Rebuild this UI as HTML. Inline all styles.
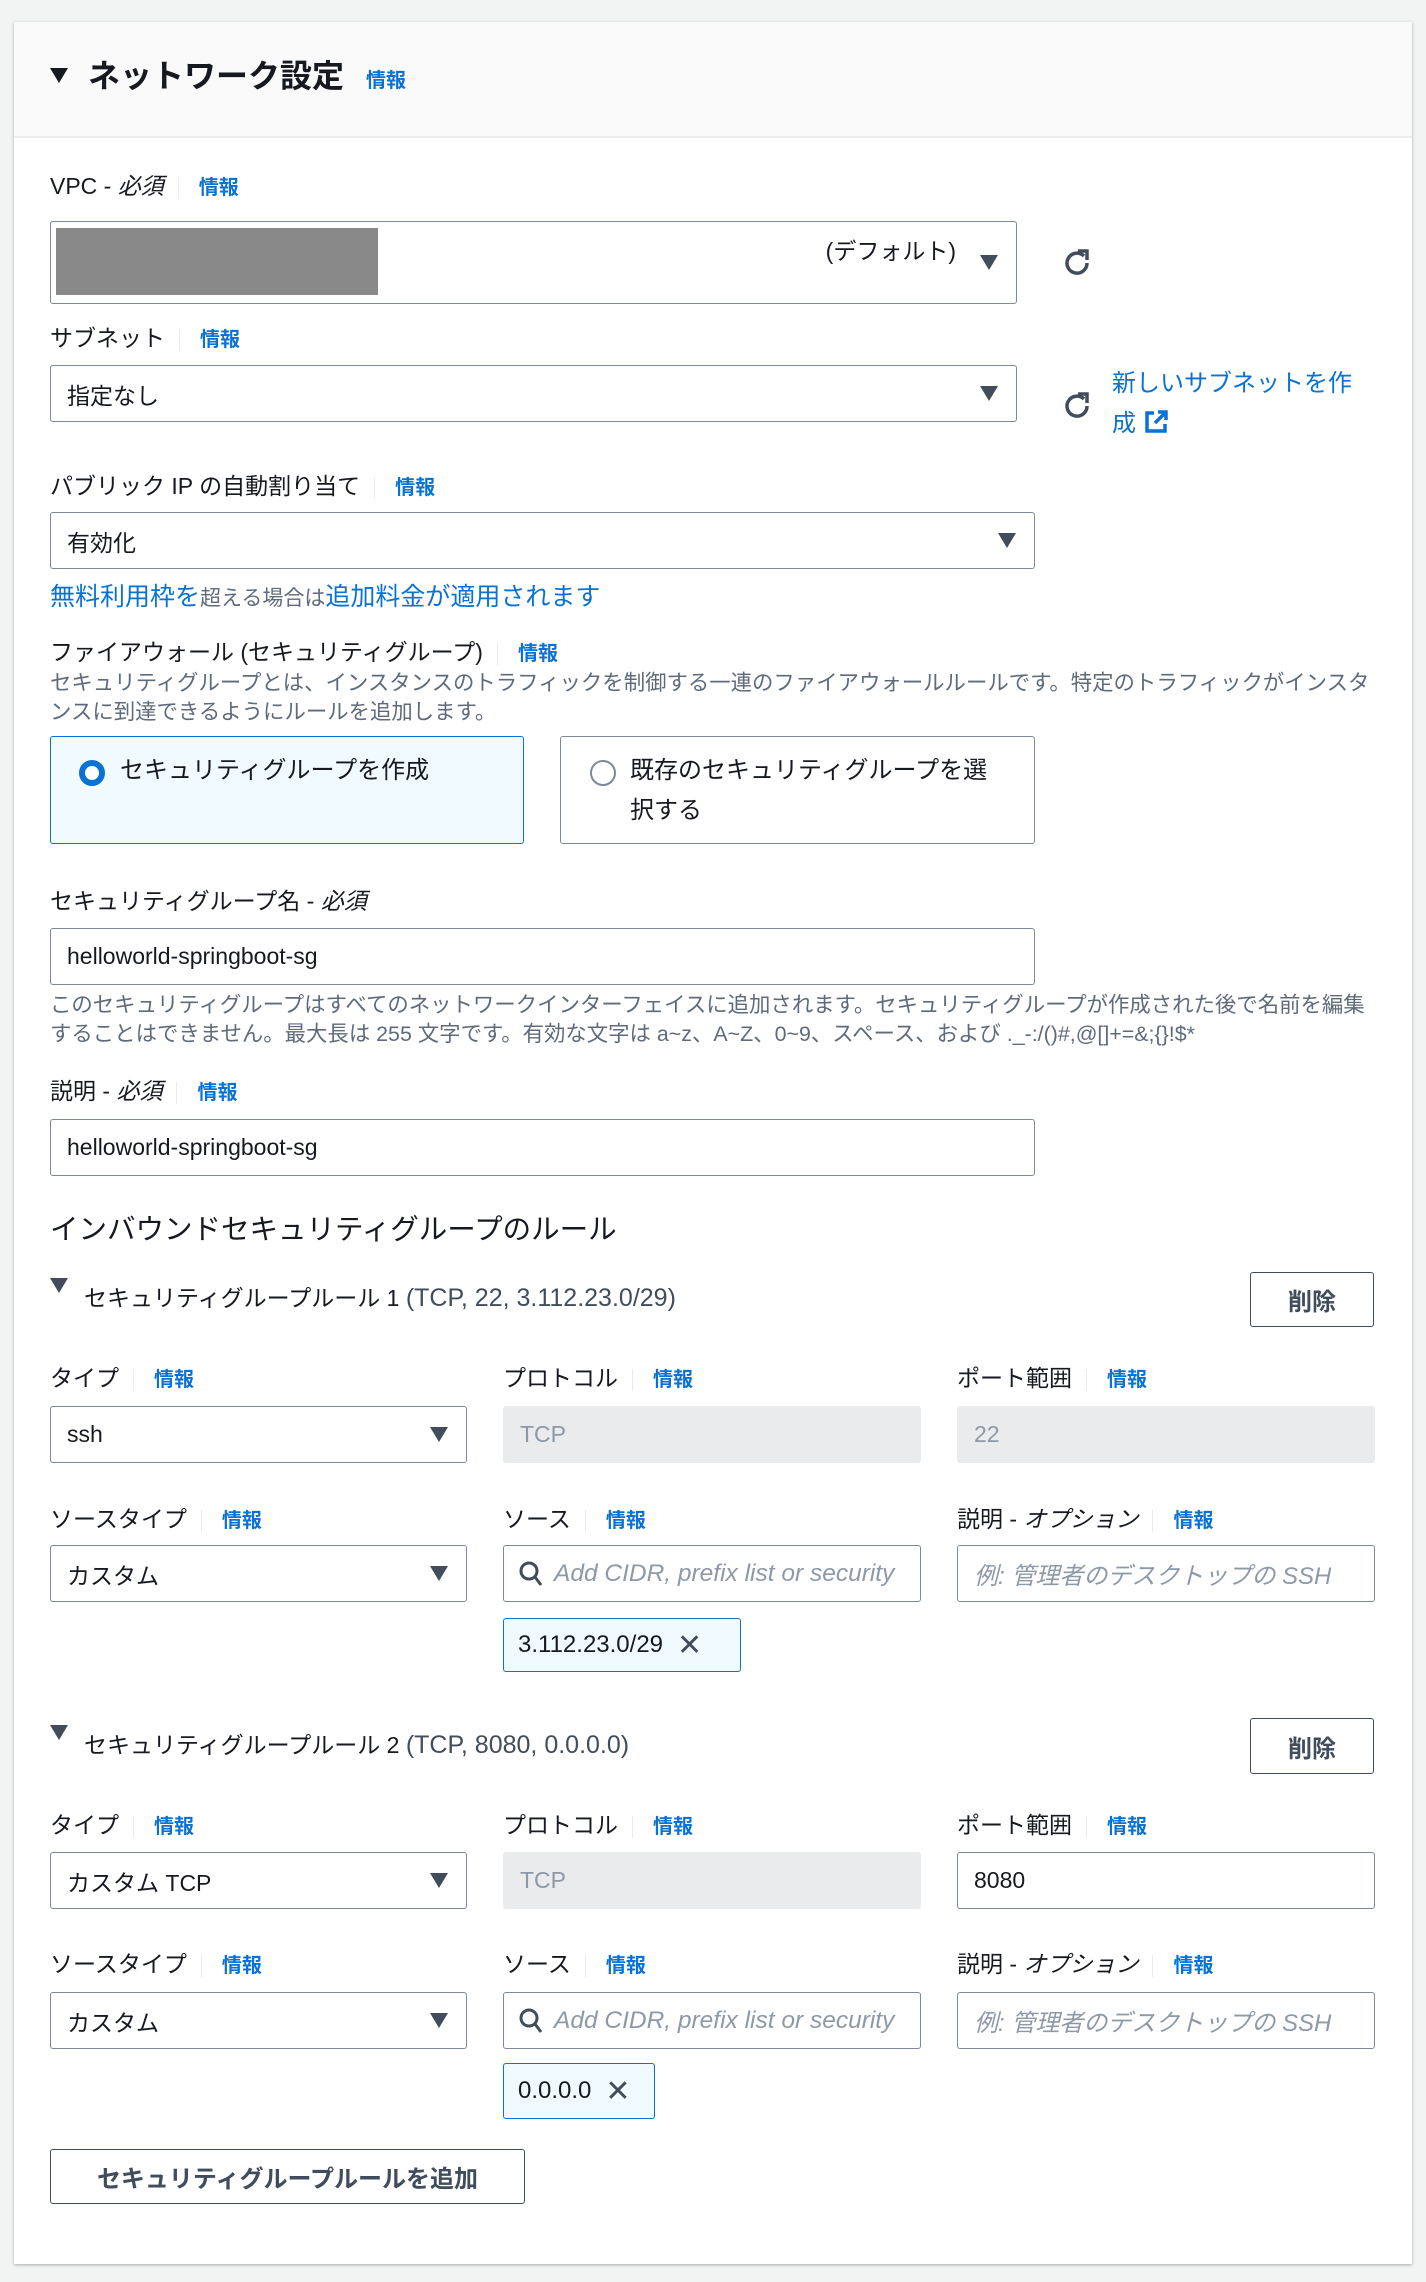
<!DOCTYPE html>
<html><head><meta charset="utf-8"><style>
body{margin:0;width:1426px;height:2282px;background:#f2f3f3;font-family:"Liberation Sans","Noto Sans CJK JP",sans-serif;color:#16191f;position:relative;overflow:hidden}
.card{position:absolute;left:14px;top:22px;width:1398px;height:2242px;background:#fff;box-shadow:0 1px 3px rgba(0,0,0,.3)}
.hdr{position:absolute;left:14px;top:22px;width:1398px;height:114px;background:#fafafa;border-bottom:2px solid #e9ebed}
.a{position:absolute;white-space:nowrap}
.lbl{font-size:23px;line-height:30px}
.info{font-size:20px;font-weight:bold;color:#0972d3;line-height:30px;padding-left:20px;border-left:1px solid #e9ebed;margin-left:14px}
.box{position:absolute;border:1.5px solid #7d8998;border-radius:3px;background:#fff;box-sizing:border-box;font-size:23px;padding-left:16px;display:flex;align-items:center}
.dis{background:#e9ebed;border-color:#e9ebed;color:#8d99a8}
.arr{position:absolute;right:18px;top:50%;margin-top:-8px;width:0;height:0;border-left:9px solid transparent;border-right:9px solid transparent;border-top:15px solid #414d5c}
.help{font-size:21.4px;color:#5f6b7a;line-height:29px}
.ph{color:#8d99a8;font-style:italic}
.btn{position:absolute;border:1.5px solid #414d5c;border-radius:3px;box-sizing:border-box;font-size:24px;font-weight:bold;color:#414d5c;display:flex;align-items:center;justify-content:center;background:#fff}
.tok{position:absolute;border:1.5px solid #0972d3;background:#f1faff;border-radius:3px;box-sizing:border-box;font-size:23px;display:flex;align-items:center;padding-left:14px}
</style></head><body>
<div class="card"></div>
<div class="hdr"></div>
<div class="a" style="left:50px;top:68px;width:0;height:0;border-left:9px solid transparent;border-right:9px solid transparent;border-top:15px solid #16191f"></div>
<div class="a" style="left:88px;top:56px;font-size:32px;font-weight:bold;line-height:40px">ネットワーク設定<span style="font-size:20px;color:#0972d3;margin-left:22px">情報</span></div>

<div class="a lbl" style="left:50px;top:171px">VPC - <i>必須</i><span class="info">情報</span></div>
<div class="box" style="left:50px;top:221px;width:967px;height:83px"><div style="position:absolute;left:5px;top:6px;width:322px;height:67px;background:#898989"></div><span style="position:absolute;right:60px;top:10px">(デフォルト)</span><div class="arr"></div></div>
<svg class="a" style="left:1062px;top:247px" width="30" height="30" viewBox="0 0 30 30"><path d="M22 9A10 10 0 1 0 25 16" fill="none" stroke="#414d5c" stroke-width="3.5"/><path d="M16 4h9v9" fill="none" stroke="#414d5c" stroke-width="3.5"/></svg>

<div class="a lbl" style="left:50px;top:323px">サブネット<span class="info">情報</span></div>
<div class="box" style="left:50px;top:365px;width:967px;height:57px">指定なし<div class="arr"></div></div>
<svg class="a" style="left:1062px;top:390px" width="30" height="30" viewBox="0 0 30 30"><path d="M22 9A10 10 0 1 0 25 16" fill="none" stroke="#414d5c" stroke-width="3.5"/><path d="M16 4h9v9" fill="none" stroke="#414d5c" stroke-width="3.5"/></svg>
<div class="a" style="left:1112px;top:364px;font-size:24px;line-height:40px;color:#0972d3">新しいサブネットを作<br>成 <svg width="26" height="26" viewBox="0 0 26 26" style="vertical-align:-4px"><path d="M11 4H4v18h18v-7M15 3h8v8M23 3L12 14" fill="none" stroke="#0972d3" stroke-width="3.5"/></svg></div>

<div class="a lbl" style="left:50px;top:471px">パブリック IP の自動割り当て<span class="info">情報</span></div>
<div class="box" style="left:50px;top:512px;width:985px;height:57px">有効化<div class="arr"></div></div>
<div class="a" style="left:50px;top:582px;font-size:25px;line-height:30px;color:#0972d3">無料利用枠を<span style="font-size:21px;color:#5f6b7a">超える場合は</span>追加料金が適用されます</div>

<div class="a lbl" style="left:50px;top:637px">ファイアウォール (セキュリティグループ)<span class="info">情報</span></div>
<div class="a help" style="left:50px;top:669px">セキュリティグループとは、インスタンスのトラフィックを制御する一連のファイアウォールルールです。特定のトラフィックがインスタ<br>ンスに到達できるようにルールを追加します。</div>
<div class="a" style="left:50px;top:736px;width:474px;height:108px;border:1.5px solid #0972d3;background:#f1faff;border-radius:3px;box-sizing:border-box"></div>
<div class="a" style="left:79px;top:760px;width:14px;height:14px;border:6px solid #0972d3;border-radius:50%;background:#fff"></div>
<div class="a lbl" style="left:120px;top:756px;font-size:24px">セキュリティグループを作成</div>
<div class="a" style="left:560px;top:736px;width:475px;height:108px;border:1.5px solid #7d8998;border-radius:3px;box-sizing:border-box"></div>
<div class="a" style="left:590px;top:760px;width:22px;height:22px;border:2px solid #7d8998;border-radius:50%"></div>
<div class="a lbl" style="left:630px;top:751px;line-height:40px;font-size:24px">既存のセキュリティグループを選<br>択する</div>

<div class="a lbl" style="left:50px;top:886px">セキュリティグループ名 - <i>必須</i></div>
<div class="box" style="left:50px;top:928px;width:985px;height:57px">helloworld-springboot-sg</div>
<div class="a help" style="left:50px;top:991px">このセキュリティグループはすべてのネットワークインターフェイスに追加されます。セキュリティグループが作成された後で名前を編集<br>することはできません。最大長は 255 文字です。有効な文字は a~z、A~Z、0~9、スペース、および ._-:/()#,@[]+=&amp;;{}!$*</div>

<div class="a lbl" style="left:50px;top:1076px">説明 - <i>必須</i><span class="info">情報</span></div>
<div class="box" style="left:50px;top:1119px;width:985px;height:57px">helloworld-springboot-sg</div>

<div class="a" style="left:50px;top:1212px;font-size:28.5px;line-height:36px">インバウンドセキュリティグループのルール</div>

<!-- rule 1 -->
<div class="a" style="left:50px;top:1278px;width:0;height:0;border-left:9px solid transparent;border-right:9px solid transparent;border-top:15px solid #414d5c"></div>
<div class="a lbl" style="left:84px;top:1283px">セキュリティグループルール 1 <span style="color:#414d5c;font-size:25px">(TCP, 22, 3.112.23.0/29)</span></div>
<div class="btn" style="left:1250px;top:1272px;width:124px;height:55px">削除</div>
<div class="a lbl" style="left:50px;top:1363px">タイプ<span class="info">情報</span></div>
<div class="a lbl" style="left:503px;top:1363px">プロトコル<span class="info">情報</span></div>
<div class="a lbl" style="left:957px;top:1363px">ポート範囲<span class="info">情報</span></div>
<div class="box" style="left:50px;top:1406px;width:417px;height:57px">ssh<div class="arr"></div></div>
<div class="box dis" style="left:503px;top:1406px;width:418px;height:57px">TCP</div>
<div class="box dis" style="left:957px;top:1406px;width:418px;height:57px">22</div>
<div class="a lbl" style="left:50px;top:1504px">ソースタイプ<span class="info">情報</span></div>
<div class="a lbl" style="left:503px;top:1504px">ソース<span class="info">情報</span></div>
<div class="a lbl" style="left:957px;top:1504px">説明 - <i>オプション</i><span class="info">情報</span></div>
<div class="box" style="left:50px;top:1545px;width:417px;height:57px">カスタム<div class="arr"></div></div>
<div class="box" style="left:503px;top:1545px;width:418px;height:57px;padding-left:14px;overflow:hidden"><svg width="26" height="28" viewBox="0 0 26 28"><circle cx="11" cy="11" r="8" fill="none" stroke="#414d5c" stroke-width="3"/><path d="M17 17l6 8" stroke="#414d5c" stroke-width="3"/></svg><span class="ph" style="margin-left:10px;font-size:24.5px">Add CIDR, prefix list or security</span></div>
<div class="box ph" style="left:957px;top:1545px;width:418px;height:57px;font-size:24px">例: 管理者のデスクトップの SSH</div>
<div class="tok" style="left:503px;top:1618px;width:238px;height:54px;font-size:24px">3.112.23.0/29<span style="margin-left:14px;font-size:30px;color:#414d5c">✕</span></div>

<!-- rule 2 -->
<div class="a" style="left:50px;top:1725px;width:0;height:0;border-left:9px solid transparent;border-right:9px solid transparent;border-top:15px solid #414d5c"></div>
<div class="a lbl" style="left:84px;top:1730px">セキュリティグループルール 2 <span style="color:#414d5c;font-size:25px">(TCP, 8080, 0.0.0.0)</span></div>
<div class="btn" style="left:1250px;top:1718px;width:124px;height:56px">削除</div>
<div class="a lbl" style="left:50px;top:1810px">タイプ<span class="info">情報</span></div>
<div class="a lbl" style="left:503px;top:1810px">プロトコル<span class="info">情報</span></div>
<div class="a lbl" style="left:957px;top:1810px">ポート範囲<span class="info">情報</span></div>
<div class="box" style="left:50px;top:1852px;width:417px;height:57px">カスタム TCP<div class="arr"></div></div>
<div class="box dis" style="left:503px;top:1852px;width:418px;height:57px">TCP</div>
<div class="box" style="left:957px;top:1852px;width:418px;height:57px">8080</div>
<div class="a lbl" style="left:50px;top:1949px">ソースタイプ<span class="info">情報</span></div>
<div class="a lbl" style="left:503px;top:1949px">ソース<span class="info">情報</span></div>
<div class="a lbl" style="left:957px;top:1949px">説明 - <i>オプション</i><span class="info">情報</span></div>
<div class="box" style="left:50px;top:1992px;width:417px;height:57px">カスタム<div class="arr"></div></div>
<div class="box" style="left:503px;top:1992px;width:418px;height:57px;padding-left:14px;overflow:hidden"><svg width="26" height="28" viewBox="0 0 26 28"><circle cx="11" cy="11" r="8" fill="none" stroke="#414d5c" stroke-width="3"/><path d="M17 17l6 8" stroke="#414d5c" stroke-width="3"/></svg><span class="ph" style="margin-left:10px;font-size:24.5px">Add CIDR, prefix list or security</span></div>
<div class="box ph" style="left:957px;top:1992px;width:418px;height:57px;font-size:24px">例: 管理者のデスクトップの SSH</div>
<div class="tok" style="left:503px;top:2063px;width:152px;height:56px;font-size:24px">0.0.0.0<span style="margin-left:14px;font-size:30px;color:#414d5c">✕</span></div>

<div class="btn" style="left:50px;top:2149px;width:475px;height:55px">セキュリティグループルールを追加</div>
</body></html>
